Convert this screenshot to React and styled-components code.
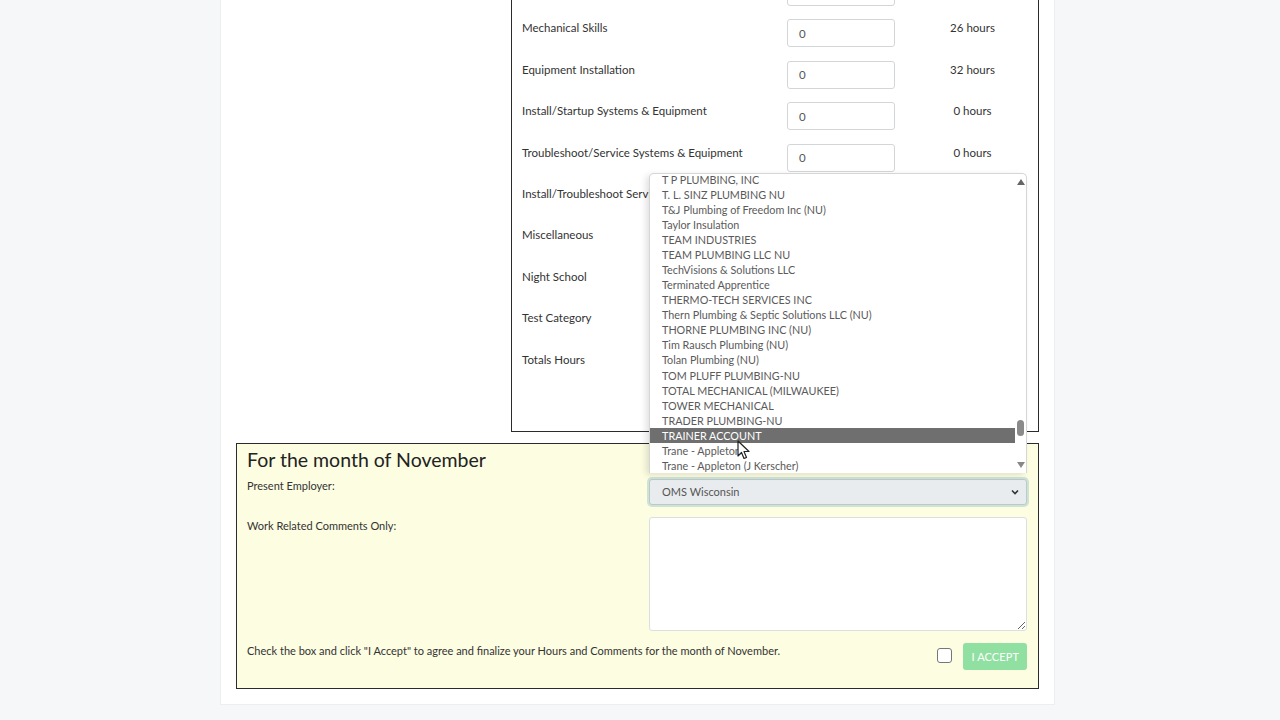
import React from 'react'
import styled, { createGlobalStyle } from 'styled-components'

const GlobalStyle = createGlobalStyle`
  html, body {
    margin: 0;
    padding: 0;
    background: #f5f7f9;
    font-family: "Lato", "Noto Sans", sans-serif;
    color: #3a3a3a;
  }
  #root {
    height: 720px;
    overflow: hidden;
  }
`

const rows = [
  { label: '', hours: '' },
  { label: 'Mechanical Skills', hours: '26 hours' },
  { label: 'Equipment Installation', hours: '32 hours' },
  { label: 'Install/Startup Systems & Equipment', hours: '0 hours' },
  { label: 'Troubleshoot/Service Systems & Equipment', hours: '0 hours' },
  { label: 'Install/Troubleshoot Service Systems & Equipment', hours: '0 hours' },
  { label: 'Miscellaneous', hours: '0 hours' },
  { label: 'Night School', hours: '0 hours' },
  { label: 'Test Category', hours: '0 hours' },
  { label: 'Totals Hours', hours: '58 hours', total: true },
]

const employers = [
  'T P PLUMBING, INC',
  'T. L. SINZ PLUMBING NU',
  'T&J Plumbing of Freedom Inc (NU)',
  'Taylor Insulation',
  'TEAM INDUSTRIES',
  'TEAM PLUMBING LLC NU',
  'TechVisions & Solutions LLC',
  'Terminated Apprentice',
  'THERMO-TECH SERVICES INC',
  'Thern Plumbing & Septic Solutions LLC (NU)',
  'THORNE PLUMBING INC (NU)',
  'Tim Rausch Plumbing (NU)',
  'Tolan Plumbing (NU)',
  'TOM PLUFF PLUMBING-NU',
  'TOTAL MECHANICAL (MILWAUKEE)',
  'TOWER MECHANICAL',
  'TRADER PLUMBING-NU',
  'TRAINER ACCOUNT',
  'Trane - Appleton',
  'Trane - Appleton (J Kerscher)',
]

function App() {
  return (
    <>
      <GlobalStyle />
      <Card>
        <TopSection>
          <div />
          <HoursBox>
            {rows.map((row, i) => (
              <HoursRow key={i}>
                <RowLabel>{row.label}</RowLabel>
                {row.total ? <span /> : <HoursInput defaultValue="0" />}
                <HoursValue>{row.hours}</HoursValue>
              </HoursRow>
            ))}
          </HoursBox>
        </TopSection>

        <MonthPanel>
          <Heading>For the month of November</Heading>
          <FieldGrid>
            <FieldLabel>Present Employer:</FieldLabel>
            <SelectWrap>
              <Listbox>
                <Options>
                  {employers.map((name) => (
                    <Option key={name} $selected={name === 'TRAINER ACCOUNT'}>{name}</Option>
                  ))}
                </Options>
                <ScrollTrack>
                  <svg width="8" height="6" viewBox="0 0 8 6"><path d="M0 6 L4 0 L8 6 Z" fill="#666" /></svg>
                  <Thumb />
                  <svg width="8" height="6" viewBox="0 0 8 6"><path d="M0 0 L4 6 L8 0 Z" fill="#888" /></svg>
                </ScrollTrack>
              </Listbox>
              <Cursor width="14" height="20" viewBox="0 0 14 20">
                <path d="M1 1 L1 16 L4.5 12.5 L7 18.5 L9.5 17.5 L7 11.5 L12 11.5 Z" fill="#fff" stroke="#222" strokeWidth="1.2" strokeLinejoin="round" />
              </Cursor>
              <FakeSelect>
                <span>OMS Wisconsin</span>
                <svg width="10" height="10" viewBox="0 0 10 10"><path d="M2 3.5 L5 6.5 L8 3.5" fill="none" stroke="#333" strokeWidth="1.6" /></svg>
              </FakeSelect>
            </SelectWrap>
            <FieldLabel $tall>Work Related Comments Only:</FieldLabel>
            <Comments />
          </FieldGrid>
          <Footer>
            <FooterText>Check the box and click "I Accept" to agree and finalize your Hours and Comments for the month of November.</FooterText>
            <Checkbox type="checkbox" />
            <AcceptButton disabled>I ACCEPT</AcceptButton>
          </Footer>
        </MonthPanel>
      </Card>
    </>
  )
}

export default App

const Card = styled.div`
  width: 835px;
  margin: -35px 0 0 220px;
  box-sizing: border-box;
  background: #fff;
  border: 1px solid #eceef0;
  border-top: none;
  padding: 0 15px 15px;
`

const TopSection = styled.div`
  display: grid;
  grid-template-columns: 275px 1fr;
`

const HoursBox = styled.div`
  border: 1px solid #2b2b2b;
  padding: 12px 0 39px 10px;
`

const HoursRow = styled.div`
  display: grid;
  grid-template-columns: 253px 108px 1fr;
  column-gap: 12px;
  align-items: start;
  height: 41.4px;
`

const RowLabel = styled.div`
  font-size: 11.5px;
  line-height: 18px;
  color: #333;
  white-space: nowrap;
`

const HoursInput = styled.input`
  box-sizing: border-box;
  width: 108px;
  height: 28px;
  border: 1px solid #d3d6d9;
  border-radius: 3px;
  padding: 0 11px;
  font-family: inherit;
  font-size: 11.5px;
  color: #555;
  background: #fff;
  outline: none;
`

const HoursValue = styled.div`
  text-align: center;
  font-size: 11.5px;
  line-height: 18px;
  color: #333;
`

const MonthPanel = styled.div`
  margin-top: 11px;
  background: #fdfde2;
  border: 1px solid #2b2b2b;
  padding: 4px 11px 18px 10px;
`

const Heading = styled.h2`
  margin: 0;
  font-size: 19.5px;
  font-weight: 400;
  line-height: 24px;
  color: #222;
`

const FieldGrid = styled.div`
  display: grid;
  grid-template-columns: 1fr 378px;
  column-gap: 12px;
  row-gap: 12px;
  margin-top: 7px;
`

const FieldLabel = styled.div`
  font-size: 11px;
  line-height: ${(p) => (p.$tall ? '18px' : '14px')};
  color: #333;
`

const SelectWrap = styled.div`
  position: relative;
`

const FakeSelect = styled.div`
  box-sizing: border-box;
  height: 26px;
  display: flex;
  align-items: center;
  justify-content: space-between;
  padding: 0 6px 0 12px;
  background: #e9ecef;
  border: 1px solid #b9c9cc;
  border-radius: 3px;
  box-shadow: 0 0 0 2px rgba(170, 205, 200, 0.55);
  font-size: 11px;
  color: #555;
`

const Listbox = styled.div`
  position: absolute;
  left: 0;
  right: 0;
  bottom: calc(100% + 6px);
  height: 300px;
  box-sizing: border-box;
  display: flex;
  background: #fff;
  border: 1px solid #d6d6d6;
  border-bottom: none;
  border-radius: 5px 5px 0 0;
  box-shadow: -3px 2px 6px rgba(0, 0, 0, 0.12);
  overflow: hidden;
  z-index: 10;
`

const Options = styled.div`
  flex: 1;
  margin-top: -2px;
`

const Option = styled.div`
  height: 15.05px;
  line-height: 15px;
  padding-left: 12px;
  font-size: 10.8px;
  white-space: nowrap;
  color: ${(p) => (p.$selected ? '#fff' : '#5a5a5a')};
  background: ${(p) => (p.$selected ? '#6f6f6f' : 'transparent')};
`

const ScrollTrack = styled.div`
  width: 11px;
  display: flex;
  flex-direction: column;
  align-items: center;
  justify-content: space-between;
  padding: 5px 0;
  position: relative;
`

const Thumb = styled.div`
  position: absolute;
  top: 246px;
  left: 2px;
  width: 7px;
  height: 16px;
  border-radius: 4px;
  background: #8a8a8a;
`

const Cursor = styled.svg`
  position: absolute;
  left: 88px;
  top: -39px;
  z-index: 20;
`

const Comments = styled.textarea`
  box-sizing: border-box;
  height: 114px;
  border: 1px solid #dcdfe2;
  border-radius: 3px;
  background: #fff;
  resize: vertical;
  font-family: inherit;
  outline: none;
`

const Footer = styled.div`
  display: flex;
  align-items: flex-start;
  margin-top: 12px;
`

const FooterText = styled.div`
  flex: 1;
  font-size: 11px;
  line-height: 16px;
  color: #333;
`

const Checkbox = styled.input`
  appearance: none;
  width: 15px;
  height: 15px;
  margin: 5px 11px 0 0;
  border: 1px solid #777;
  border-radius: 3px;
  background: #fff;
`

const AcceptButton = styled.button`
  height: 27px;
  padding: 0 8px;
  border: none;
  border-radius: 3px;
  background: #8fe0a1;
  color: #fff;
  font-family: inherit;
  font-size: 11px;
  letter-spacing: 0.1px;
`
